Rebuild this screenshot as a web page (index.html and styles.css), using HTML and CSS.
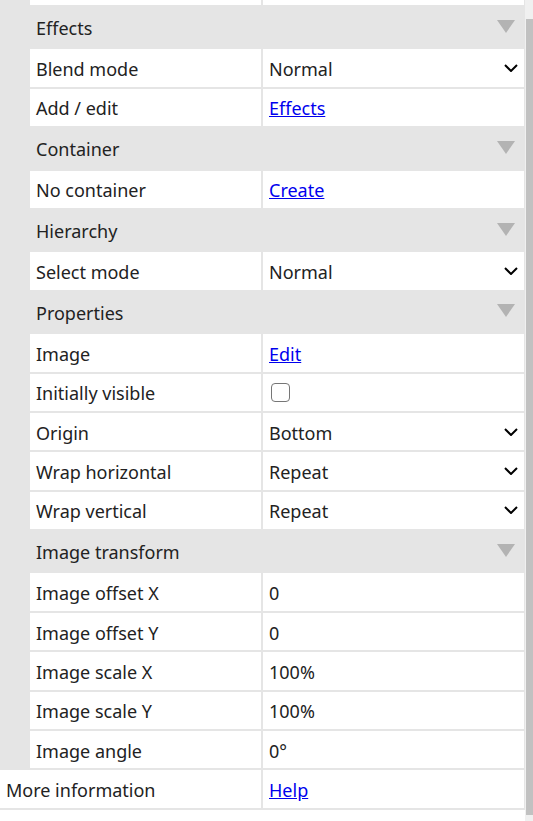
FILE: index.html
```html
<!DOCTYPE html>
<html>
<head>
<meta charset="utf-8">
<link rel="stylesheet" href="styles.css">
</head>
<body>
<div class="page">
  <div class="panel">
    <div class="row cut"><div class="cell"></div><div class="cell"></div></div>

    <div class="sec-head"><span>Effects</span><span class="tri"></span></div>
    <div class="rows">
      <div class="row"><div class="cell">Blend mode</div><div class="cell sel">Normal<svg class="chev" viewBox="0 0 14 8"><polyline points="1,1 7,7 13,1"/></svg></div></div>
      <div class="row"><div class="cell">Add / edit</div><div class="cell"><a class="link">Effects</a></div></div>
    </div>

    <div class="sec-head"><span>Container</span><span class="tri"></span></div>
    <div class="rows">
      <div class="row"><div class="cell">No container</div><div class="cell"><a class="link">Create</a></div></div>
    </div>

    <div class="sec-head"><span>Hierarchy</span><span class="tri"></span></div>
    <div class="rows">
      <div class="row"><div class="cell">Select mode</div><div class="cell sel">Normal<svg class="chev" viewBox="0 0 14 8"><polyline points="1,1 7,7 13,1"/></svg></div></div>
    </div>

    <div class="sec-head"><span>Properties</span><span class="tri"></span></div>
    <div class="rows">
      <div class="row"><div class="cell">Image</div><div class="cell"><a class="link">Edit</a></div></div>
      <div class="row"><div class="cell">Initially visible</div><div class="cell"><span class="checkbox"></span></div></div>
      <div class="row"><div class="cell">Origin</div><div class="cell sel">Bottom<svg class="chev" viewBox="0 0 14 8"><polyline points="1,1 7,7 13,1"/></svg></div></div>
      <div class="row"><div class="cell">Wrap horizontal</div><div class="cell sel">Repeat<svg class="chev" viewBox="0 0 14 8"><polyline points="1,1 7,7 13,1"/></svg></div></div>
      <div class="row"><div class="cell">Wrap vertical</div><div class="cell sel">Repeat<svg class="chev" viewBox="0 0 14 8"><polyline points="1,1 7,7 13,1"/></svg></div></div>
    </div>

    <div class="sec-head"><span>Image transform</span><span class="tri"></span></div>
    <div class="rows">
      <div class="row"><div class="cell">Image offset X</div><div class="cell">0</div></div>
      <div class="row"><div class="cell">Image offset Y</div><div class="cell">0</div></div>
      <div class="row"><div class="cell">Image scale X</div><div class="cell">100%</div></div>
      <div class="row"><div class="cell">Image scale Y</div><div class="cell">100%</div></div>
      <div class="row"><div class="cell">Image angle</div><div class="cell">0°</div></div>
      <div class="row full"><div class="cell">More information</div><div class="cell"><a class="link">Help</a></div></div>
    </div>
  </div>
  <div class="scrollbar"><div class="thumb"></div></div>
</div>
</body>
</html>
```

FILE: styles.css
```css
html, body {
  margin: 0;
  padding: 0;
  background: #ffffff;
}
body {
  font-family: "Noto Sans", "Open Sans", sans-serif;
  font-size: 18px;
  color: #222222;
}
.page {
  display: flex;
  width: 533px;
  height: 821px;
  overflow: hidden;
}
.panel {
  width: 525px;
  align-self: flex-start;
  background: #e5e5e5;
  display: flex;
  flex-direction: column;
  padding-bottom: 2px;
}
.rows {
  display: flex;
  flex-direction: column;
  gap: 2px;
}
.row {
  display: grid;
  grid-template-columns: 231px 261px;
  column-gap: 2px;
  margin-left: 30px;
  height: 37.4px;
}
.row.cut {
  height: 5px;
}
.row.full {
  grid-template-columns: 261px 261px;
  margin-left: 0;
}
.cell {
  background: #ffffff;
  display: flex;
  align-items: center;
  padding-left: 6px;
  padding-top: 2px;
  box-sizing: border-box;
  white-space: nowrap;
}
.cell.sel {
  justify-content: space-between;
  padding-right: 6px;
}
.chev {
  width: 14px;
  height: 8px;
  fill: none;
  stroke: #000000;
  stroke-width: 2;
  margin-top: -2px;
}
.link {
  color: #0000ee;
  text-decoration: underline;
  cursor: pointer;
}
.checkbox {
  width: 17px;
  height: 17px;
  border: 1.6px solid #767676;
  border-radius: 4px;
  margin-left: 2px;
  margin-top: -2px;
  background: #fff;
}
.sec-head {
  height: 44.4px;
  margin-left: 30px;
  padding-left: 6px;
  padding-right: 10px;
  padding-top: 2px;
  box-sizing: border-box;
  display: flex;
  align-items: center;
  justify-content: space-between;
}
.tri {
  width: 0;
  height: 0;
  border-left: 9.5px solid transparent;
  border-right: 9.5px solid transparent;
  border-top: 13px solid #b3b3b3;
  margin-top: -4px;
}
.scrollbar {
  width: 8px;
  height: 821px;
  background: #f0f0f0;
  padding-top: 19px;
  box-sizing: border-box;
}
.thumb {
  margin-left: 1px;
  width: 7px;
  height: 796px;
  background: #c1c1c1;
}
```
